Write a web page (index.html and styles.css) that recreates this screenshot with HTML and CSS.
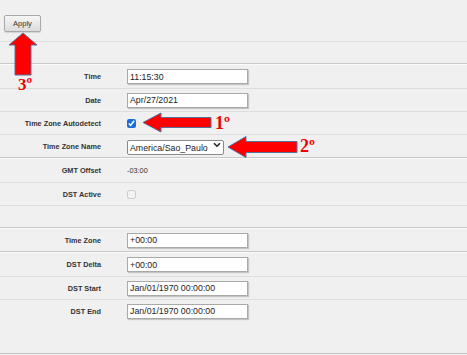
FILE: index.html
```html
<!DOCTYPE html>
<html>
<head>
<meta charset="utf-8">
<link rel="stylesheet" href="styles.css">
</head>
<body>
<div class="page">
  <div class="toolbar"><button class="btn">Apply</button></div>
  <div class="spacer"></div>
  <div class="divider"></div>

  <div class="row h23 line"><div class="label">Time</div><div class="value"><input class="field" value="11:15:30"></div></div>
  <div class="row line"><div class="label">Date</div><div class="value"><input class="field" value="Apr/27/2021"></div></div>
  <div class="row line"><div class="label">Time Zone Autodetect</div><div class="value"><input type="checkbox" class="check" checked></div></div>
  <div class="row"><div class="label">Time Zone Name</div><div class="value"><span class="select-wrap"><select class="select"><option>America/Sao_Paulo</option></select><svg class="chev" width="8" height="6" viewBox="0 0 8 6"><polyline points="1,1.2 4,4.2 7,1.2" fill="none" stroke="#222" stroke-width="1.6"/></svg></span></div></div>
  <div class="divider"></div>

  <div class="row h23 line"><div class="label">GMT Offset</div><div class="value"><span class="plain">-03:00</span></div></div>
  <div class="row line"><div class="label">DST Active</div><div class="value"><input type="checkbox" class="check" disabled></div></div>
  <div class="row h21"></div>
  <div class="divider"></div>

  <div class="row"><div class="label">Time Zone</div><div class="value"><input class="field" value="+00:00"></div></div>
  <div class="divider"></div>

  <div class="row h23 line"><div class="label">DST Delta</div><div class="value"><input class="field" value="+00:00"></div></div>
  <div class="row line"><div class="label">DST Start</div><div class="value"><input class="field" value="Jan/01/1970 00:00:00"></div></div>
  <div class="row"><div class="label">DST End</div><div class="value"><input class="field" value="Jan/01/1970 00:00:00"></div></div>
  <div class="filler"></div>

  <svg class="arrows" width="467" height="355" viewBox="0 0 467 355">
    <polygon points="23,33 37,45 31,45 31,75 15,75 15,45 9,45" class="arrow"/>
    <polygon points="143,122.5 161,113 161,117.5 211,117.5 211,127.5 161,127.5 161,132" class="arrow"/>
    <polygon points="228,147 246,136.5 246,141.5 297,141.5 297,152.5 246,152.5 246,157.5" class="arrow"/>
  </svg>
  <span class="mark m3">3º</span>
  <span class="mark m1">1º</span>
  <span class="mark m2">2º</span>
</div>
</body>
</html>
```
FILE: styles.css
```css
html, body {
  margin: 0;
  padding: 0;
}
body {
  background: #f0f0f0;
  font-family: "Liberation Sans", Arial, sans-serif;
  color: #333;
}
.page {
  position: relative;
  width: 467px;
  height: 355px;
  overflow: hidden;
  display: flex;
  flex-direction: column;
}
.toolbar {
  height: 41px;
  flex: none;
  border-bottom: 1px solid #e0e0e0;
  padding: 12px 0 0 4px;
  box-sizing: content-box;
  height: 29px;
}
.btn {
  width: 37px;
  height: 17px;
  box-sizing: border-box;
  margin: 0;
  padding: 0;
  font-family: "Liberation Sans", Arial, sans-serif;
  font-size: 7.5px;
  color: #333;
  background: linear-gradient(#f6f6f6, #dcdcdc);
  border: 1px solid #a8a8a8;
  border-radius: 2px;
  box-shadow: 0 1px 1px rgba(0,0,0,0.12);
}
.spacer {
  height: 21px;
  flex: none;
}
.divider {
  flex: none;
  height: 1px;
  border-top: 1px solid #c8c8c8;
  background: #fbfbfb;
}
.row {
  flex: none;
  height: 22px;
  display: flex;
  align-items: center;
}
.row.h23 { height: 23px; }
.row.h21 { height: 21px; }
.row.line {
  border-bottom: 1px solid #dddddd;
}
.label {
  width: 101px;
  text-align: right;
  font-size: 7.3px;
  font-weight: bold;
  color: #333;
  flex: none;
}
.value {
  margin-left: 26px;
  display: flex;
  align-items: center;
}
.field {
  box-sizing: border-box;
  width: 121px;
  height: 15px;
  margin: 0;
  padding: 0 2px;
  border: 1px solid #a9a9a9;
  background: #fff;
  box-shadow: 1px 1px 1px rgba(0,0,0,0.18);
  font-family: "Liberation Sans", Arial, sans-serif;
  font-size: 8.8px;
  color: #222;
  outline: none;
}
.check {
  width: 9px;
  height: 9px;
  margin: 0;
  accent-color: #1b6fdb;
}
.select-wrap {
  position: relative;
  display: inline-block;
}
.select {
  appearance: none;
  -webkit-appearance: none;
  box-sizing: border-box;
  width: 97px;
  height: 15px;
  margin: 0;
  padding: 0 0 0 2px;
  border: 1px solid #8a8a8a;
  border-radius: 2px;
  background: #fff;
  font-family: "Liberation Sans", Arial, sans-serif;
  font-size: 8.8px;
  color: #222;
}
.chev {
  position: absolute;
  left: 86px;
  top: 5px;
}
.plain {
  font-size: 7.3px;
  color: #333;
}
.filler {
  flex: none;
  height: 31px;
  border-bottom: 1px solid #c4c4c4;
}
.arrows {
  position: absolute;
  left: 0;
  top: 0;
  pointer-events: none;
}
.arrow {
  fill: #ff0000;
  stroke: #56709c;
  stroke-width: 1;
}
.mark {
  position: absolute;
  font-family: "Liberation Serif", "Times New Roman", serif;
  font-weight: bold;
  color: #f00000;
  line-height: 1;
}
.m3 { left: 18px; top: 76px; font-size: 17px; }
.m1 { left: 215px; top: 114px; font-size: 18px; }
.m2 { left: 300px; top: 137px; font-size: 18px; }
```
